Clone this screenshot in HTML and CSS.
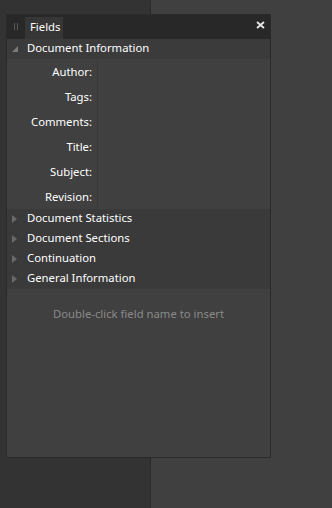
FILE: index.html
```html
<!DOCTYPE html>
<html>
<head>
<meta charset="utf-8">
<link rel="stylesheet" href="styles.css">
</head>
<body>
<div class="desk">
  <div class="left-pane"></div>
  <div class="right-pane"></div>
</div>
<div class="panel">
  <div class="panel-head">
    <div class="grip"><span></span><span></span></div>
    <div class="tab">Fields</div>
    <div class="spacer"></div>
    <svg class="close" width="9" height="8" viewBox="0 0 9 8"><path d="M1 1 L8 7 M8 1 L1 7" stroke="#e8e8e8" stroke-width="1.8"/></svg>
  </div>
  <div class="group open">
    <svg class="tri" width="6" height="6" viewBox="0 0 6 6"><path d="M6 0 L6 6 L0 6 Z" fill="#7a7a7a"/></svg>
    <span>Document Information</span>
  </div>
  <div class="fields">
    <div class="row"><div class="label">Author:</div><div class="value"></div></div>
    <div class="row"><div class="label">Tags:</div><div class="value"></div></div>
    <div class="row"><div class="label">Comments:</div><div class="value"></div></div>
    <div class="row"><div class="label">Title:</div><div class="value"></div></div>
    <div class="row"><div class="label">Subject:</div><div class="value"></div></div>
    <div class="row"><div class="label">Revision:</div><div class="value"></div></div>
  </div>
  <div class="group closed"><svg class="tri" width="5" height="8" viewBox="0 0 5 8"><path d="M0 0 L5 4 L0 8 Z" fill="#6a6a6a"/></svg><span>Document Statistics</span></div>
  <div class="group closed"><svg class="tri" width="5" height="8" viewBox="0 0 5 8"><path d="M0 0 L5 4 L0 8 Z" fill="#6a6a6a"/></svg><span>Document Sections</span></div>
  <div class="group closed"><svg class="tri" width="5" height="8" viewBox="0 0 5 8"><path d="M0 0 L5 4 L0 8 Z" fill="#6a6a6a"/></svg><span>Continuation</span></div>
  <div class="group closed"><svg class="tri" width="5" height="8" viewBox="0 0 5 8"><path d="M0 0 L5 4 L0 8 Z" fill="#6a6a6a"/></svg><span>General Information</span></div>
  <div class="hint">Double-click field name to insert</div>
</div>
</body>
</html>
```
FILE: styles.css
```css
html, body {
  margin: 0;
  padding: 0;
  width: 332px;
  height: 508px;
  overflow: hidden;
  font-family: "Noto Sans", "Open Sans", sans-serif;
  font-size: 11.3px;
}
.desk {
  display: flex;
  height: 508px;
}
.left-pane {
  width: 150px;
  background: #333333;
}
.right-pane {
  flex: 1;
  background: #404040;
  border-left: 1px solid #2a2a2a;
}
.panel {
  position: absolute;
  left: 6px;
  top: 14px;
  width: 263px;
  height: 442px;
  border: 1px solid #2a2a2a;
  background: #404040;
  display: flex;
  flex-direction: column;
}
.panel-head {
  height: 24px;
  background: #282828;
  display: flex;
  align-items: flex-end;
}
.grip {
  display: flex;
  gap: 2px;
  margin: 0 7px 9px 7px;
}
.grip span {
  width: 1px;
  height: 7px;
  background: #5a5a5a;
}
.tab {
  height: 22px;
  width: 38px;
  background: #363636;
  color: #ffffff;
  line-height: 20px;
  padding-left: 5px;
  box-sizing: border-box;
}
.spacer { flex: 1; }
.close {
  margin: 0 5px 10px 0;
}
.group {
  height: 20px;
  display: flex;
  align-items: center;
  color: #ffffff;
  background: #3a3a3a;
  line-height: 18px;
}
.group span {
  padding-bottom: 2px;
}
.group.open {
  background: #3b3b3b;
}
.group .tri {
  flex: none;
}
.group.open .tri {
  margin-left: 5px;
  width: 6px;
  margin-right: 9px;
}
.group.closed .tri {
  margin-left: 5px;
  width: 5px;
  margin-right: 10px;
}
.fields {
  display: flex;
  flex-direction: column;
}
.row {
  height: 25px;
  display: flex;
}
.label {
  width: 91px;
  box-sizing: border-box;
  padding-right: 5px;
  text-align: right;
  color: #ffffff;
  line-height: 25px;
  border-right: 1px solid #383838;
}
.value {
  flex: 1;
}
.hint {
  text-align: center;
  color: #8a8a8a;
  padding-top: 17px;
}
```
